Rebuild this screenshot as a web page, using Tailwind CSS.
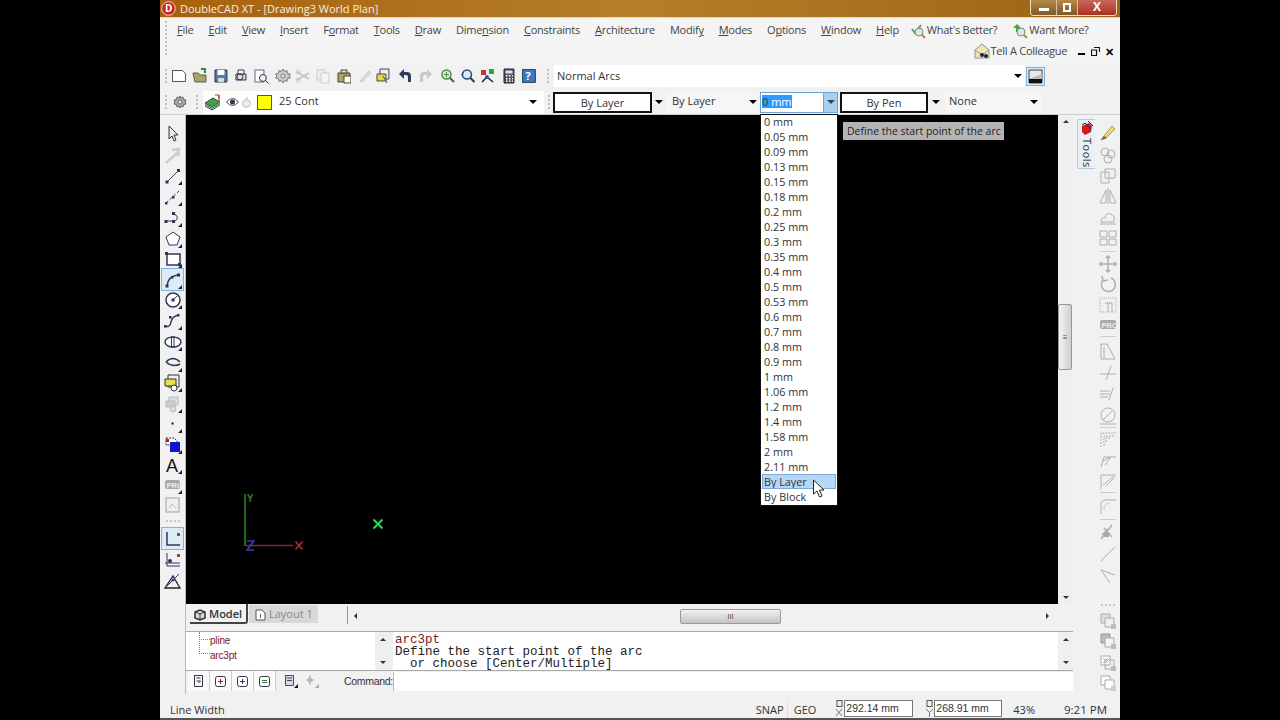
<!DOCTYPE html>
<html lang="en">
<head>
    <meta charset="UTF-8">
    <title>DoubleCAD XT</title>
    <script src="https://cdn.jsdelivr.net/npm/@tailwindcss/browser@4"></script>
</head>
<body class="bg-black h-[720px] overflow-hidden flex justify-center font-['Open_Sans',sans-serif] text-[11px] text-[#333]">
    <div class="w-[960px] h-[720px] bg-[#f1f1f1] flex flex-col relative border-b-2 border-[#555]">

        <!-- Title bar -->
        <div class="h-[18px] shrink-0 flex items-center bg-gradient-to-r from-[#a8610c] via-[#b57f28] to-[#9a6414] border-b border-[#e6d7b8]">
            <svg class="w-[15px] h-[15px] ml-[1px]" viewBox="0 0 15 15"><circle cx="7.5" cy="7.5" r="6.8" fill="#c8261f" stroke="#f5d0c0"/><text x="4" y="11" font-size="10" font-weight="bold" fill="#fff">D</text></svg>
            <span class="ml-[4px] mt-[1px] text-[11px] text-[#f7efe0] font-medium">DoubleCAD XT - [Drawing3 World Plan]</span>
            <div class="ml-auto mr-[3px] flex h-[16px] -mt-[2px] border border-t-0 border-[#f0e2c8] rounded-b-[4px] overflow-hidden">
                <div class="w-[25px] bg-gradient-to-b from-[#b78a44] to-[#7d5a28] flex items-center justify-center"><div class="w-[10px] h-[3px] mt-[4px] bg-white"></div></div>
                <div class="w-[22px] bg-gradient-to-b from-[#b78a44] to-[#7d5a28] flex items-center justify-center border-x border-[#d8c49c]"><div class="w-[8px] h-[9px] border-2 border-white"></div></div>
                <div class="w-[38px] bg-gradient-to-b from-[#c9685a] to-[#a8301f] flex items-center justify-center text-white font-bold text-[12px] leading-none">X</div>
            </div>
        </div>

        <!-- Menu bar -->
        <div class="h-[47px] shrink-0 bg-[#f4f4f4] relative tracking-[-0.25px]">
            <div class="flex items-center h-[25px] pl-[17px] gap-[15px] text-[11px] text-[#444] whitespace-nowrap">
                <span><u>F</u>ile</span>
                <span><u>E</u>dit</span>
                <span><u>V</u>iew</span>
                <span><u>I</u>nsert</span>
                <span>F<u>o</u>rmat</span>
                <span><u>T</u>ools</span>
                <span><u>D</u>raw</span>
                <span>Dime<u>n</u>sion</span>
                <span><u>C</u>onstraints</span>
                <span><u>A</u>rchitecture</span>
                <span>Modif<u>y</u></span>
                <span><u>M</u>odes</span>
                <span>O<u>p</u>tions</span>
                <span><u>W</u>indow</span>
                <span><u>H</u>elp</span>
                <span class="flex items-center gap-[1px] -ml-[4px]">
                    <svg class="w-[16px] h-[16px]" viewBox="0 0 16 16"><path d="M2 6l3 4 6-8" fill="none" stroke="#5aa548" stroke-width="2"/><circle cx="9" cy="9" r="4" fill="#d8e8f0" stroke="#7a8a70"/><path d="M12 12l3 3" stroke="#a88a40" stroke-width="2"/></svg>
                    What's Better?
                </span>
                <span class="flex items-center gap-[1px]">
                    <svg class="w-[16px] h-[16px]" viewBox="0 0 16 16"><path d="M5 1l4 4H7v4H4V5H1z" fill="#4aa548"/><circle cx="9" cy="9" r="4" fill="#d8e8f0" stroke="#7a8a70"/><path d="M12 12l3 3" stroke="#a88a40" stroke-width="2"/></svg>
                    Want More?
                </span>
            </div>
            <div class="flex items-center justify-end h-[16px] pr-[6px] text-[11px] text-[#444] whitespace-nowrap">
                <svg class="w-[16px] h-[16px] mr-[1px]" viewBox="0 0 16 16"><path d="M1 7l7-6 7 6v8H1z" fill="#f3e3b0" stroke="#8a94a4"/><path d="M1 7l7 5 7-5" fill="none" stroke="#8a94a4"/><circle cx="8" cy="12" r="2" fill="#223"/><circle cx="12" cy="13" r="2" fill="#223"/></svg>
                Tell A Colleague
                <span class="ml-[11px] w-[7px] h-[2px] mt-[6px] bg-black"></span>
                <svg class="ml-[6px] w-[9px] h-[9px]" viewBox="0 0 9 9"><path d="M3 .5h5.500V5M.5 3h5v5.500h-5z" fill="none" stroke="#111" stroke-width="1.200"/></svg>
                <span class="ml-[5px] font-bold text-[11px] leading-none text-black">✕</span>
            </div>
            <div class="absolute left-[5px] top-[3px] h-[34px] border-l-2 border-dotted border-[#c0c0c0]"></div>
        </div>

        <!-- Toolbar 1 -->
        <div class="h-[25px] shrink-0 flex items-center pl-[5px] pb-[3px]">
            <div class="h-[14px] border-l-2 border-dotted border-[#c0c0c0]"></div>
            <div id="tools1" class="flex items-center ml-[4px] w-[366px] h-[18px]"></div>
            <div class="h-[14px] border-l-2 border-dotted border-[#c0c0c0] ml-[10px]"></div>
            <div class="ml-[5px] w-[471px] h-[22px] bg-white flex items-center pl-[3px] text-[11px]">
                Normal Arcs
                <span class="ml-auto mr-[3px] w-0 h-0 border-x-[4px] border-x-transparent border-t-[4px] border-t-black"></span>
            </div>
            <div class="ml-[1px] w-[19px] h-[19px] border border-[#7fb2dc] bg-[#dcebf6] flex items-center justify-center">
                <svg class="w-[15px] h-[15px]" viewBox="0 0 15 15"><path d="M1 1h13v13H1z" fill="#e8e8e8" stroke="#444"/><path d="M1 10L14 5v9H1z" fill="#bbb"/><path d="M1 10h13v4H1z" fill="#111"/></svg>
            </div>
        </div>

        <!-- Toolbar 2 -->
        <div class="h-[25px] shrink-0 flex items-center text-[11px] whitespace-nowrap border-b border-[#cfcfcf]">
            <div class="h-[14px] border-l-2 border-dotted border-[#c0c0c0] ml-[5px]"></div>
            <svg class="w-[14px] h-[14px] ml-[6px]" viewBox="0 0 14 14"><path d="M7 1l1 2 2-1 .5 2.500L13 5l-1 2 1 2-2.500.5L10 12l-2-1-1 2-1-2-2 1-.5-2.500L1 9l1-2-1-2 2.500-.5L4 2l2 1z" fill="#aaa" stroke="#666"/><circle cx="7" cy="7" r="2" fill="#eee" stroke="#666"/></svg>
            <div class="h-[14px] border-l-2 border-dotted border-[#c0c0c0] ml-[9px]"></div>
            <div class="ml-[5px] w-[341px] h-[23px] bg-white flex items-center">
                <svg class="w-[17px] h-[17px] ml-[1px]" viewBox="0 0 17 17"><path d="M1 9l8-5 7 4-8 5z" fill="#4c9a4c" stroke="#1e5a2c"/><path d="M1 12l7 4 8-5M1 10.500l7 4 8-5" fill="none" stroke="#1e5a2c"/><path d="M11 1h4v4M15 1v6" fill="none" stroke="#c03020"/></svg>
                <svg class="w-[13px] h-[10px] ml-[5px]" viewBox="0 0 13 10"><path d="M.5 5Q6.500-2 12.500 5 6.500 12 .5 5z" fill="#fff" stroke="#445"/><circle cx="6.500" cy="5" r="2.500" fill="#334"/></svg>
                <svg class="w-[9px] h-[11px] ml-[3px]" viewBox="0 0 9 11"><circle cx="4.500" cy="6.500" r="3.800" fill="#eee" stroke="#bbb"/><path d="M5 3V0" stroke="#bbb"/></svg>
                <div class="w-[15px] h-[15px] ml-[6px] bg-[#ffff00] border border-[#555]"></div>
                <span class="ml-[7px] -mt-[2px]">25 Cont</span>
                <span class="ml-auto mr-[7px] w-0 h-0 border-x-[4px] border-x-transparent border-t-[4px] border-t-black"></span>
            </div>
            <div class="h-[14px] border-l-2 border-dotted border-[#c0c0c0] ml-[4px]"></div>
            <div class="ml-[3px] w-[99px] h-[21px] bg-white border-2 border-[#111] text-center leading-[17px]">By Layer</div>
            <span class="ml-[3px] w-0 h-0 border-x-[4px] border-x-transparent border-t-[4px] border-t-black"></span>
            <div class="ml-[3px] w-[92px] h-[21px] bg-[#f6f6f6] flex items-center pl-[6px] pb-[2px]">
                By Layer
                <span class="ml-auto mr-[1px] mt-[2px] w-0 h-0 border-x-[4px] border-x-transparent border-t-[4px] border-t-black"></span>
            </div>
            <div class="ml-[2px] w-[78px] h-[21px] flex border border-[#6ba3d6] bg-white">
                <div class="flex-1 flex items-center pl-[1px] pb-[2px]"><span class="bg-[#3399ff] text-white leading-[13px]"><span class="text-[#333]">0</span> mm</span></div>
                <div class="w-[14px] bg-[#a9d0f0] border-l border-[#6ba3d6] flex items-center justify-center"><span class="w-0 h-0 border-x-[4px] border-x-transparent border-t-[4px] border-t-[#345]"></span></div>
            </div>
            <div class="ml-[2px] w-[88px] h-[21px] bg-white border-2 border-[#111] text-center leading-[17px]">By Pen</div>
            <span class="ml-[4px] w-0 h-0 border-x-[4px] border-x-transparent border-t-[4px] border-t-black"></span>
            <div class="ml-[5px] w-[97px] h-[21px] bg-[#f6f6f6] flex items-center pl-[4px] pb-[2px]">
                None
                <span class="ml-auto mr-[4px] mt-[2px] w-0 h-0 border-x-[4px] border-x-transparent border-t-[4px] border-t-black"></span>
            </div>
        </div>

        <!-- Work area -->
        <div class="flex-1 flex min-h-0">
            <!-- Left toolbar -->
            <div id="leftRail" class="w-[26px] shrink-0 flex flex-col items-center pt-[8px] border-r border-[#bbb]"></div>

            <div class="flex-1 min-w-0 flex flex-col">
                <div class="h-[489px] shrink-0 flex">
                    <!-- Canvas -->
                    <div class="flex-1 bg-black relative">
                        <svg class="absolute left-[55px] top-[375px] w-[70px] h-[65px]" viewBox="0 0 70 65">
                            <path d="M4 4v52" stroke="#2d8a2d" stroke-width="1.500"/>
                            <path d="M4 55.500h48" stroke="#7a2d2d" stroke-width="1.500"/>
                            <text x="6" y="12" font-size="10" font-weight="bold" fill="#2d7a2d">Y</text>
                            <path d="M6 51h7l-7 9h7" fill="none" stroke="#3a3ab8" stroke-width="1.500"/>
                            <path d="M54.500 51.500l7 8M61.500 51.500l-7 8" stroke="#a03030" stroke-width="1.800"/>
                        </svg>
                        <svg class="absolute left-[186px] top-[403px] w-[12px] h-[12px]" viewBox="0 0 12 12"><path d="M1.500 1.500l9 9M10.500 1.500l-9 9" stroke="#22dd55" stroke-width="2"/></svg>
                    </div>
                    <!-- Vertical scrollbar -->
                    <div class="w-[15px] shrink-0 bg-[#efefef] flex flex-col items-center relative">
                        <span class="mt-[5px] w-0 h-0 border-x-[3px] border-x-transparent border-b-[3px] border-b-[#333]"></span>
                        <div class="absolute top-[189px] left-0 w-[14px] h-[66px] bg-gradient-to-r from-[#f4f4f4] to-[#cfcfcf] border border-[#999] rounded-[2px] flex items-center justify-center text-[8px] text-[#555]">≡</div>
                        <span class="mt-auto mb-[5px] w-0 h-0 border-x-[3px] border-x-transparent border-t-[3px] border-t-[#333]"></span>
                    </div>
                </div>

                <!-- Tabs + horizontal scrollbar -->
                <div class="h-[27px] shrink-0 flex items-start">
                    <div class="ml-[4px] w-[58px] h-[20px] flex items-center gap-[3px] pl-[3px] pt-[3px] border-r-2 border-b-2 border-[#444] rounded-br-[3px] font-semibold text-[11px]">
                        <svg class="w-[13px] h-[13px]" viewBox="0 0 13 13"><path d="M2 4l5-2 5 2v6l-5 2-5-2z" fill="#ddd" stroke="#333" stroke-width="1.500"/><path d="M2 4l5 2 5-2M7 6v6" fill="none" stroke="#333"/></svg>
                        Model
                    </div>
                    <div class="ml-[1px] w-[69px] h-[18px] mt-[1px] bg-[#d8d8d8] flex items-center gap-[3px] pl-[6px] pt-[1px] text-[#888] text-[11px]">
                        <svg class="w-[11px] h-[12px]" viewBox="0 0 11 12"><path d="M1 1h6l3 3v7H1z" fill="#fff" stroke="#555"/><path d="M5.500 9V5" stroke="#555"/></svg>
                        Layout 1
                    </div>
                    <div class="ml-[29px] w-[1px] h-[18px] mt-[2px] bg-[#999]"></div>
                    <span class="ml-[6px] mt-[9px] w-0 h-0 border-y-[3px] border-y-transparent border-r-[3px] border-r-[#333]"></span>
                    <div class="ml-[323px] w-[101px] h-[15px] mt-[5px] bg-gradient-to-b from-[#f2f2f2] to-[#c4c4c4] border border-[#999] rounded-[2px] text-center text-[8px] leading-[12px] text-[#444]">III</div>
                    <span class="ml-[265px] mt-[9px] w-0 h-0 border-y-[3px] border-y-transparent border-l-[3px] border-l-[#333]"></span>
                </div>

                <!-- Command history -->
                <div class="h-[40px] shrink-0 flex border-y border-[#a8a8a8] bg-white">
                    <div class="w-[189px] relative font-['Liberation_Sans',sans-serif] text-[10px] text-[#7a1a1a] tracking-[-0.2px]">
                        <div class="absolute left-[13px] top-0 w-[11px] h-[22px] border-l border-b border-dotted border-[#888]"></div>
                        <div class="absolute left-[13px] top-0 w-[11px] h-[8px] border-b border-dotted border-[#888]"></div>
                        <div class="pl-[24px] leading-[15px] pt-[1px]">pline<br>arc3pt</div>
                    </div>
                    <div class="w-[18px] bg-[#efefef] flex flex-col items-center justify-between py-[6px] pr-[2px]">
                        <span class="w-0 h-0 border-x-[3px] border-x-transparent border-b-[3px] border-b-[#333]"></span>
                        <span class="w-0 h-0 border-x-[3px] border-x-transparent border-t-[3px] border-t-[#333]"></span>
                    </div>
                    <div class="flex-1 pl-[2px] pt-[2px] font-['Liberation_Mono',monospace] text-[12.500px] leading-[12px] text-[#222] whitespace-pre"><span class="text-[#7a1a1a]">arc3pt</span>
Define the start point of the arc
  or choose [Center/Multiple]</div>
                    <div class="w-[15px] bg-[#efefef] flex flex-col items-center justify-between py-[6px]">
                        <span class="w-0 h-0 border-x-[3px] border-x-transparent border-b-[3px] border-b-[#333]"></span>
                        <span class="w-0 h-0 border-x-[3px] border-x-transparent border-t-[3px] border-t-[#333]"></span>
                    </div>
                </div>

                <!-- Command line -->
                <div class="h-[20px] shrink-0 flex items-center">
                    <div class="ml-[2px] flex h-[20px] items-center">
                        <div class="w-[22px] h-full bg-[#fafafa] border-r border-[#ccc] flex items-center justify-center"><svg class="w-[11px] h-[12px]" viewBox="0 0 11 12"><path d="M1.500.5h8v11h-8zM3.500 3h4M3.500 6h4l-2 2" fill="none" stroke="#334"/></svg></div>
                        <div class="w-[22px] h-full bg-[#fafafa] border-r border-[#ccc] flex items-center justify-center"><svg class="w-[11px] h-[11px]" viewBox="0 0 11 11"><rect x=".5" y=".5" width="10" height="10" rx="2" fill="#fff" stroke="#334"/><path d="M5.500 3v5M3 5.500h5" stroke="#a02030"/></svg></div>
                        <div class="w-[22px] h-full bg-[#fafafa] border-r border-[#ccc] flex items-center justify-center"><svg class="w-[11px] h-[11px]" viewBox="0 0 11 11"><rect x=".5" y=".5" width="10" height="10" rx="2" fill="#fff" stroke="#334"/><path d="M5.500 3v5M3 5.500h5" stroke="#2030a0"/></svg></div>
                        <div class="w-[22px] h-full bg-[#fafafa] border-r border-[#ccc] flex items-center justify-center"><svg class="w-[11px] h-[11px]" viewBox="0 0 11 11"><rect x=".5" y=".5" width="10" height="10" rx="2" fill="#fff" stroke="#334"/><path d="M3 4.500h5M3 6.500h5" stroke="#2a7a3a"/></svg></div>
                        <svg class="ml-[8px] w-[15px] h-[14px]" viewBox="0 0 15 14"><path d="M1.500 1.500h8v10h-8z" fill="#d8d8e8" stroke="#445"/><path d="M3 4h5M3 6.500h5" stroke="#445"/><path d="M14 14h-4l4-4z" fill="#111"/></svg>
                        <svg class="ml-[6px] w-[15px] h-[14px]" viewBox="0 0 15 14"><circle cx="5" cy="6" r="2" fill="none" stroke="#aaa"/><path d="M5 1v10M1 6h8" stroke="#aaa"/><path d="M14 14h-4l4-4z" fill="#aaa"/></svg>
                    </div>
                    <span class="ml-[24px] w-[49px] shrink-0 whitespace-nowrap pt-[1px] font-['Liberation_Sans',sans-serif] text-[10.500px] tracking-[-0.3px]">Command:</span>
                    <div class="flex-1 h-[19px] bg-white border-l border-[#bbb]"></div>
                </div>
            </div>

            <!-- Right toolbars -->
            <div id="rightRail" class="w-[47px] shrink-0 relative flex flex-col items-end pr-[2px] pt-[8px]">
                <div class="absolute left-[4px] top-[4px] w-[18px] h-[50px] bg-[#eaf1f6] border border-r-0 border-[#b8cbd8] rounded-l-[2px] flex flex-col items-center">
                    <svg class="w-[16px] h-[16px] mt-[1px]" viewBox="0 0 16 16"><path d="M3 5l7-3 3 3-1 6-6 3-3-3z" fill="#d81818"/><path d="M6 2l6 6M9 0l5 5M3 4l3-2" stroke="#222"/></svg>
                    <span class="[writing-mode:vertical-rl] text-[11px] leading-[16px] tracking-[0.5px] text-[#333] mt-[1px]">Tools</span>
                </div>
            </div>
        </div>

        <!-- Status bar -->
        <div class="h-[24px] shrink-0 flex items-end text-[11px] whitespace-nowrap">
            <span class="ml-[10px]">Line Width</span>
            <span class="ml-auto">SNAP</span>
            <span class="ml-[3px] pl-[6px] border-l border-[#ddd]">GEO</span>
            <svg class="ml-[19px] mb-[1px] w-[9px] h-[17px]" viewBox="0 0 9 17"><rect x="2" y=".5" width="5" height="6" fill="none" stroke="#555"/><path d="M1 9l6 7M7 9l-6 7" stroke="#777"/></svg>
            <div class="w-[69px] h-[17px] mb-[1px] bg-white border border-[#777] pl-[1px] font-['Liberation_Sans',sans-serif] text-[10.500px] leading-[15px]">292.14 mm</div>
            <svg class="ml-[12px] mb-[1px] w-[9px] h-[17px]" viewBox="0 0 9 17"><rect x="2" y=".5" width="5" height="6" fill="none" stroke="#555"/><path d="M1 9l3.500 3.500L8 9M4.500 12.500V17" fill="none" stroke="#777"/></svg>
            <div class="w-[68px] h-[17px] mb-[1px] bg-white border border-[#777] pl-[1px] font-['Liberation_Sans',sans-serif] text-[10.500px] leading-[15px]">268.91 mm</div>
            <span class="ml-[11px]">43%</span>
            <span class="ml-[29px] mr-[13px] text-[11.500px]">9:21 PM</span>
        </div>

        <!-- Line width dropdown -->
        <div class="absolute left-[600px] top-[114px] w-[78px] h-[392px] bg-white border border-[#111] text-[10.800px] leading-[15px] text-[#333]">
            <div id="widths" class="-mt-[1px]"></div>
        </div>

        <!-- Tooltip -->
        <div class="absolute left-[683px] top-[122px] w-[161px] h-[18px] bg-[#b4b4b4] pl-[4px] text-[10.500px] leading-[18px] text-[#222] whitespace-nowrap">Define the start point of the arc</div>

        <!-- Mouse pointer -->
        <svg class="absolute left-[652px] top-[479px] w-[14px] h-[20px]" viewBox="0 0 14 20"><path d="M1.500 1v14l3.500-3 2.500 6 2.500-1-2.500-6h4.500z" fill="#fff" stroke="#222"/></svg>
    </div>

    <script>
        const t = '<path d="M19 19h-4l4-4z" fill="#222"/>';
        const n = 'fill="none" stroke="#2c3a5c"';
        const g = 'fill="none" stroke="#aeaeae"';

        // Top toolbar icons (16 box)
        const tools1 = [
            '<path d="M1.500 2.500h10l3 3v8h-13z" fill="#fff" stroke="#555"/>',
            '<path d="M1 5h5l2 2h6v7H3z" fill="#a8a860" stroke="#556"/><path d="M9 1h4v4" fill="none" stroke="#3a8a3a" stroke-width="2"/>',
            '<path d="M2 2h12v12H2z" fill="#5a78a8" stroke="#334"/><path d="M4.500 2h7v5h-7z" fill="#fff"/><path d="M5 10h6v4H5z" fill="#cdd"/>',
            '<path d="M3 6h10v6H3z" fill="#ddd" stroke="#334"/><path d="M5 2h6v4H5z" fill="#fff" stroke="#334"/><circle cx="7" cy="9" r="3" fill="none" stroke="#334"/>',
            '<path d="M2 2h9v12H2z" fill="#fff" stroke="#667"/><circle cx="10" cy="10" r="3.500" fill="#e8f0f8" stroke="#334"/><path d="M12.500 12.500l3 3" stroke="#334"/>',
            '<path d="M8 1l1.500 2.500L12 2.500l.5 3 3 .5-1.500 2 1.500 2-3 .5-.5 3-2.500-1L8 15l-1.500-2.500-2.500 1-.5-3-3-.5L2 8 .5 6l3-.5.5-3 2.500 1z" fill="#ccc" stroke="#777"/><circle cx="8" cy="8" r="2" fill="#eee" stroke="#777"/>',
            '<path d="M2 4l12 7M2 12l12-7" stroke="#c4c4c4" stroke-width="1.500"/><circle cx="3" cy="4" r="2" fill="none" stroke="#c4c4c4"/><circle cx="3" cy="12" r="2" fill="none" stroke="#c4c4c4"/>',
            '<path d="M2 2h8v10H2z" fill="#eee" stroke="#ccc"/><path d="M6 5h8v10H6z" fill="#f4f4f4" stroke="#ccc"/>',
            '<path d="M2 5h12v9H2z" fill="#b8a060" stroke="#443"/><path d="M5 2h6v3H5z" fill="#ddd" stroke="#443"/><path d="M8 8h7v7H8z" fill="#fff" stroke="#443"/>',
            '<path d="M3 13L12 3l2 2-9 9z" fill="#ddd" stroke="#c8c8c8"/>',
            '<path d="M4 1h9v10H4z" fill="#eee" stroke="#445"/><path d="M1 6h9v7H1z" fill="#e8d840" stroke="#445"/><path d="M7 8l4 7" stroke="#2a5a8a"/>',
            '<path d="M2 6l5-5v3h3q4 0 4 4v6h-3V9q0-2-2-2H7v4z" fill="#2a3a5a"/>',
            '<path d="M14 6L9 1v3H6Q2 4 2 8v6h3V9q0-2 2-2h2v4z" fill="#c8c8c8"/>',
            '<circle cx="6.500" cy="6.500" r="4.500" fill="#d8ead0" stroke="#4a8a4a" stroke-width="1.500"/><path d="M4 6.500h5M6.500 4v5" stroke="#4a8a4a"/><path d="M10 10l4 4" stroke="#556" stroke-width="2"/>',
            '<circle cx="7" cy="6.500" r="4.500" fill="#d8e8f4" stroke="#2a4a7a" stroke-width="1.500"/><path d="M10.500 10l4 4" stroke="#334" stroke-width="2"/><path d="M1 7l3-3" stroke="#2a4a7a"/>',
            '<path d="M1 2h5v5H1z" fill="#d03030"/><path d="M9 1h5v5H9z" fill="#30a040"/><path d="M2 14l5-5 6 5" fill="none" stroke="#223" stroke-width="1.500"/><circle cx="7" cy="9" r="2" fill="#3050c0"/>',
            '<path d="M3 1h10v14H3z" fill="#556" stroke="#223"/><path d="M4.500 2.500h7v3h-7z" fill="#dde"/><path d="M5 7h1.500v1.500H5zM8 7h1.500v1.500H8zM11 7h1v1.500h-1zM5 10h1.500v1.500H5zM8 10h1.500v1.500H8zM11 10h1v1.500h-1zM5 12.500h1.500V14H5zM8 12.500h1.500V14H8zM11 12.500h1V14h-1z" fill="#fff"/>',
            '<path d="M1.500 1.500h13v13h-13z" fill="#3a78c0" stroke="#345"/><text x="4.500" y="12.500" font-size="11" font-weight="bold" fill="#fff">?</text>',
        ];
        const gaps1 = [0, 5, 5, 4, 4, 6, 4, 4, 5, 6, 3, 5, 5, 6, 4, 4, 5, 4];
        document.getElementById('tools1').innerHTML = tools1.map((p, i) =>
            `<svg width="16" height="16" viewBox="0 0 16 16" style="margin-left:${gaps1[i]}px">${p}</svg>`).join('');

        // Left toolbar: [height of row, icon]
        const left = [
            [22, `<path d="M6 2v13l3-3 2 5 2-1-2-5h4z" fill="#eee" stroke="#333"/>`],
            [21, `<path d="M3 17L15 6M9 4l7-1-1 7" fill="none" stroke="#ccc" stroke-width="2.500"/>`],
            [20, `<path d="M4 16L15 5" ${n}/><rect x="2.500" y="14.500" width="3" height="3" fill="#335"/><rect x="14" y="3" width="3" height="3" fill="#335"/>` + t],
            [21, `<path d="M3 16L16 4" ${n} stroke-dasharray="3 2"/><rect x="2" y="15" width="2.500" height="2.500" fill="#335"/><rect x="9" y="9" width="2.500" height="2.500" fill="#335"/>` + t],
            [21, `<path d="M3 13h9q4-2 1-6l-3-1" ${n}/><rect x="1.500" y="12" width="3" height="3" fill="#335"/><rect x="9" y="12" width="3" height="3" fill="#335"/><rect x="9" y="4" width="3" height="3" fill="#335"/>` + t],
            [21, `<path d="M10 3l7 5-3 8H6L3 8z" fill="#fff" stroke="#2c3a5c"/>` + t],
            [20, `<path d="M4 5h13v11H4z" fill="#fff" stroke="#2c3a5c" stroke-width="1.500"/><rect x="2" y="3" width="3" height="3" fill="#335"/><rect x="15" y="14" width="3" height="3" fill="#335"/>` + t],
            [21, `<path d="M4 16Q5 6 15 5" ${n} stroke-width="1.500"/><rect x="2.500" y="14.500" width="3" height="3" fill="#335"/><rect x="8" y="6" width="2.500" height="2.500" fill="#335"/><rect x="14" y="3.500" width="3" height="3" fill="#335"/>` + t, true],
            [20, `<circle cx="10" cy="10" r="7" fill="#fff" stroke="#2c3a5c" stroke-width="1.500"/><path d="M10 10l4-4" ${n}/><rect x="8.500" y="8.500" width="3" height="3" fill="#335"/>` + t],
            [21, `<path d="M2 15q5 2 6-4t8-7" ${n} stroke-width="1.500"/><rect x="1" y="14" width="2.500" height="2.500" fill="#335"/><rect x="6" y="5" width="2.500" height="2.500" fill="#335"/><rect x="14" y="3" width="2.500" height="2.500" fill="#335"/>` + t],
            [21, `<ellipse cx="10" cy="10" rx="8" ry="5" fill="#fff" stroke="#2c3a5c" stroke-width="1.500"/><rect x="8.500" y="5" width="2.500" height="10" fill="none" stroke="#335"/>` + t],
            [21, `<path d="M3 9q7-7 14 0M3 9q7 6 14 2" ${n} stroke-width="1.500"/>` + t],
            [20, `<path d="M5 2h11v12H5z" fill="#eee" stroke="#334"/><path d="M2 6h11v7H2z" fill="#e8e040" stroke="#334"/><circle cx="11" cy="15" r="3" fill="#fff" stroke="#334"/>` + t],
            [21, `<path d="M6 3h9v8H6z" fill="#ddd" stroke="#bbb"/><path d="M3 7h9v6H3z" fill="#ccc" stroke="#bbb"/><circle cx="10" cy="15" r="3" fill="#ddd" stroke="#bbb"/>` + t],
            [20, `<rect x="8.500" y="8.500" width="2" height="2" fill="#111"/>` + t],
            [21, `<path d="M3 3h8l3 3v4H3z" fill="#fff" stroke="#333" stroke-dasharray="2 1"/><rect x="3" y="4" width="3" height="3" fill="#d01010"/><rect x="7" y="7" width="10" height="10" fill="#1010d0"/>` + t],
            [20, `<text x="3" y="17" font-size="18" font-family="Liberation Sans" fill="#111">A</text>` + t],
            [20, `<rect x="2" y="5" width="15" height="9" rx="2" fill="#a8a8a8"/><text x="3.500" y="12.500" font-size="7.500" font-weight="bold" font-family="Liberation Sans" fill="#eee">PRO</text>` + t],
            [20, `<path d="M3 3h13v14H3z" fill="#eee" stroke="#bbb" stroke-width="1.500"/><path d="M6 13l3-4 4 4" fill="none" stroke="#bbb"/>`],
        ];
        const bottom = [
            [21, `<path d="M4 3v13h13" ${n} stroke-width="1.500"/><rect x="14" y="4" width="3" height="3" fill="#c03040"/>`, true],
            [21, `<path d="M4 3v13h13M2 13h15" ${n}/><circle cx="7" cy="11" r="2" fill="#335"/><rect x="14" y="4" width="3" height="3" fill="#c03040"/>`],
            [21, `<path d="M2 17h15L10 5z" fill="none" stroke="#222" stroke-width="1.300"/><path d="M4 15L16 3" stroke="#2c3a8c"/><circle cx="10" cy="9" r="1.500" fill="#2c3a8c"/>`],
        ];
        const cell = ([h, p, on]) =>
            `<div class="w-[21px] flex items-center justify-center shrink-0 ${on ? 'bg-[#dcebf6] outline outline-[#7fb2dc]' : ''}" style="height:${h}px"><svg width="20" height="20" viewBox="0 0 20 20">${p}</svg></div>`;
        document.getElementById('leftRail').innerHTML =
            left.map(cell).join('') +
            '<div class="w-[14px] border-t-2 border-dotted border-[#c8c8c8] mt-[5px] mb-[6px]"></div>' +
            bottom.map(cell).join('');

        // Right toolbar: row heights keep each icon on the reference's centre line
        const r = [
            [20, `<path d="M3 17l3-4 8-10 3 3-9 9z" fill="#e8e070" stroke="#aa9a50"/><path d="M3 17l3-4 3 2z" fill="#a05050"/>`],
            [24, `<circle cx="7" cy="7" r="4" ${g}/><circle cx="13" cy="9" r="4" ${g}/><circle cx="10" cy="14" r="4" ${g}/>`],
            [18, `<path d="M3 6h8v11H3zM7 3h10v9H7z" ${g}/>`],
            [22, `<path d="M10 2v16M8 4L2 17h6zM12 4l6 13h-6z" ${g}/>`],
            [20, `<path d="M3 15q0-5 4-4 1-6 5-4 5 0 4 8zM2 17h16" ${g}/>`],
            [22, `<path d="M2 3h7v6H2zM11 3h7v6h-7zM2 11h7v6H2zM11 11h7v6h-7z" ${g}/>`],
            ['rule'],
            [20, `<path d="M10 2v16M2 10h16M8 4l2-2 2 2M8 16l2 2 2-2M4 8l-2 2 2 2M16 8l2 2-2 2" ${g} stroke-width="1.500"/>`],
            [20, `<path d="M13 4a7 7 0 1 1-8 2M4 2l1 5 5-1" ${g} stroke-width="1.500"/>`],
            [22, `<path d="M2 3h16v14H2z" ${g} stroke-dasharray="1 1"/><path d="M7 8h7v9M10 8v9" ${g}/>`],
            [18, `<rect x="2" y="5" width="16" height="9" rx="2" fill="#aaa"/><text x="3.500" y="12.500" font-size="7.500" font-weight="bold" font-family="Liberation Sans" fill="#eee">PRO</text>`],
            ['rule'],
            [26, `<path d="M3 2h6l8 15H3z" ${g}/><path d="M6 5v12" ${g}/>`],
            [16, `<path d="M2 11h16M13 3L8 17" ${g}/>`],
            [26, `<path d="M2 7h10M2 10h10M2 13h8M15 4l-4 12" ${g}/>`],
            [18, `<circle cx="10" cy="9" r="7" ${g}/><path d="M5 14L14 5M2 18h16" ${g}/>`],
            ['rule'],
            [18, `<path d="M3 18V4h15M6 17V7h11M8 8v5M11 8v3" ${g} stroke-dasharray="2 1"/>`],
            [24, `<path d="M3 17l3-10h12M5 11l8-4M7 15l6-8" ${g}/>`],
            [18, `<path d="M3 18V4h15M5 14L16 5M8 15L17 6" ${g}/>`],
            ['rule'],
            [22, `<path d="M3 18V8q0-4 5-4h10" ${g}/><path d="M6 13q0-5 6-6" ${g} stroke-dasharray="2 1"/>`],
            ['rule'],
            [20, `<path d="M3 17L14 3M6 6l8 9M4 13l6-6" ${g} stroke-width="1.500"/><path d="M6 10h5v5H6z" fill="#aaa"/>`],
            [24, `<path d="M3 17L17 3" ${g}/>`],
            [18, `<path d="M3 5l14 5M3 5l9 13" ${g}/>`],
            ['space', 19],
            ['dots'],
            [28, `<path d="M3 3h9v9H3z" fill="#ddd" stroke="#aaa"/><path d="M7 7h9v9H7z" fill="#eee" stroke="#aaa"/><path d="M13 13h5v5h-5z" fill="#bbb"/>`],
            [12, `<path d="M3 3h9v9H3z" fill="#bbb" stroke="#999"/><path d="M7 7h9v9H7z" fill="#f4f4f4" stroke="#aaa"/><path d="M13 13h5v5h-5z" fill="#bbb"/>`],
            [32, `<path d="M3 3h9v9H3z" fill="#fff" stroke="#aaa"/><path d="M5 5l5 5M10 5l-5 5" stroke="#aaa"/><path d="M7 7h9v9H7z" fill="none" stroke="#aaa"/><path d="M13 13h5v5h-5z" fill="#bbb"/>`],
            [8, `<path d="M3 3h9v9H3z" fill="#fff" stroke="#aaa"/><path d="M7 7h9v9H7z" fill="#fff" stroke="#aaa"/><path d="M13 13h5v5h-5z" fill="#ccc"/>`],
        ];
        document.getElementById('rightRail').insertAdjacentHTML('beforeend', r.map(([h, p]) => {
            if (h === 'rule') return '<div class="w-[16px] mr-[2px] border-t border-[#ccc] my-[2px] shrink-0"></div>';
            if (h === 'dots') return '<div class="w-[14px] mr-[3px] border-t-2 border-dotted border-[#c8c8c8] my-[1px] shrink-0"></div>';
            if (h === 'space') return `<div class="shrink-0" style="height:${p}px"></div>`;
            return `<div class="shrink-0 flex items-center" style="height:${h}px"><svg class="shrink-0" width="20" height="20" viewBox="0 0 20 20">${p}</svg></div>`;
        }).join(''));

        // Line width dropdown rows
        const widths = ['0 mm', '0.05 mm', '0.09 mm', '0.13 mm', '0.15 mm', '0.18 mm', '0.2 mm', '0.25 mm', '0.3 mm', '0.35 mm', '0.4 mm', '0.5 mm', '0.53 mm', '0.6 mm', '0.7 mm', '0.8 mm', '0.9 mm', '1 mm', '1.06 mm', '1.2 mm', '1.4 mm', '1.58 mm', '2 mm', '2.11 mm', 'By Layer', 'By Block'];
        document.getElementById('widths').innerHTML = widths.map(w =>
            w === 'By Layer'
                ? `<div class="h-[15px] mx-[1px] pl-[2px] bg-[#b8d6f5] outline outline-[#7aa9dc] -outline-offset-1">${w}</div>`
                : `<div class="h-[15px] pl-[3px]">${w}</div>`).join('');
    </script>
</body>
</html>
